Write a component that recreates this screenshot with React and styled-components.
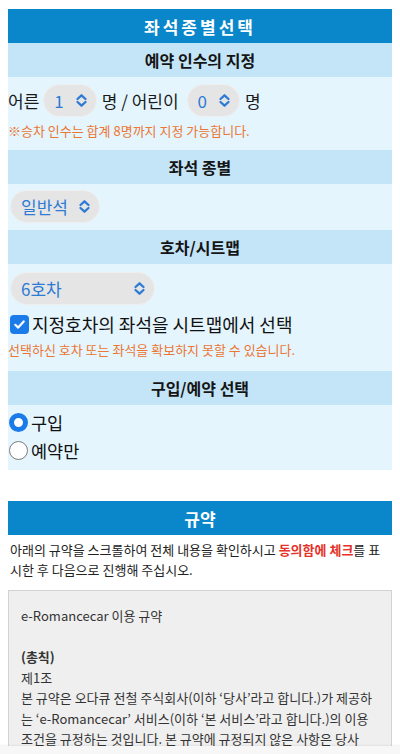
import styled, { createGlobalStyle } from 'styled-components'

const GlobalStyle = createGlobalStyle`
  body {
    margin: 0;
    background: #ffffff;
    font-family: "Noto Sans CJK KR", "Noto Sans", sans-serif;
    color: #111;
  }
`

const Page = styled.div`
  padding: 9px 8px 40px;
`

const TitleBar = styled.div`
  height: 34px;
  background-color: #0a87cb;
  color: #ffffff;
  font-weight: 700;
  font-size: 17px;
  letter-spacing: ${(props) => props.spacing || '0px'};
  display: flex;
  align-items: center;
  justify-content: center;
`

const SubHeader = styled.div`
  height: 34px;
  background-color: #c4e5f8;
  font-weight: 700;
  font-size: 16px;
  color: #151515;
  display: flex;
  align-items: center;
  justify-content: center;
`

const Panel = styled.div`
  background-color: #e4f5fd;
  padding: ${(props) => props.pad || '0'};
  display: flex;
  flex-direction: column;
`

const CountRow = styled.div`
  display: flex;
  align-items: center;
  gap: 5px;
  height: 33px;
  font-size: 17px;
  color: #1a1a1a;
`

const Pill = styled.div`
  display: flex;
  align-items: center;
  justify-content: ${(props) => (props.wide ? 'space-between' : 'flex-start')};
  gap: ${(props) => props.gap || '10px'};
  width: ${(props) => props.width || 'auto'};
  height: 33px;
  box-sizing: border-box;
  padding: 0 8px 0 10px;
  margin-left: ${(props) => props.ml || '0'};
  border-radius: 17px;
  background-color: #e5e5e6;
  border: 1px solid #efefef;
  color: #2d7bd5;
  font-size: 17px;
  align-self: flex-start;
`

const Note = styled.div`
  color: #ec7633;
  font-size: 13px;
  line-height: 20px;
  margin-top: ${(props) => props.mt || '4px'};
`

const CheckRow = styled.div`
  display: flex;
  align-items: center;
  gap: 3px;
  height: 26px;
  margin-top: 6px;
  margin-left: 2px;
  font-size: 18px;
  color: #111;
`

const CheckBox = styled.span`
  width: 19px;
  height: 19px;
  border-radius: 4px;
  background-color: #1a7be9;
  display: flex;
  align-items: center;
  justify-content: center;
`

const RadioRow = styled.div`
  display: flex;
  align-items: center;
  gap: 3px;
  height: 28px;
  margin-left: 1px;
  font-size: 17.5px;
  color: #111;
`

const Radio = styled.span`
  width: 19px;
  height: 19px;
  box-sizing: border-box;
  border-radius: 50%;
  background-color: #ffffff;
  border: ${(props) => (props.checked ? '5.5px solid #1a7be9' : '1.5px solid #7a7a7a')};
`

const Gap = styled.div`
  height: 31px;
`

const Intro = styled.p`
  margin: 5px 0 10px;
  padding: 0 2px;
  font-size: 13px;
  line-height: 20px;
  color: #222;

  strong {
    color: #e5322a;
    font-weight: 700;
  }
`

const TermsBox = styled.div`
  box-sizing: border-box;
  padding: 15px 12px;
  background-color: #efefef;
  border: 1px solid #d3d3d3;
  font-size: 13px;
  line-height: 20.5px;
  color: #333;

  p {
    margin: 0;
  }
  b {
    font-weight: 700;
  }
`

const BottomBar = styled.div`
  position: fixed;
  left: 0;
  right: 0;
  bottom: 0;
  height: 8px;
  background-color: #f7f7f7;
  box-shadow: 0 -1px 2px rgba(0, 0, 0, 0.06);
`

function UpDown() {
  return (
    <svg width="13" height="15" viewBox="0 0 13 15" fill="none">
      <path d="M2.5 6 L6.5 2.3 L10.5 6" stroke="#2d7bd5" strokeWidth="2.3" strokeLinecap="round" strokeLinejoin="round" />
      <path d="M2.5 9 L6.5 12.7 L10.5 9" stroke="#2d7bd5" strokeWidth="2.3" strokeLinecap="round" strokeLinejoin="round" />
    </svg>
  )
}

function Check() {
  return (
    <svg width="13" height="13" viewBox="0 0 13 13" fill="none">
      <path d="M2.3 6.8 L5.2 9.6 L10.7 3.4" stroke="#ffffff" strokeWidth="2.2" strokeLinecap="round" strokeLinejoin="round" />
    </svg>
  )
}

export default function App() {
  return (
    <>
      <GlobalStyle />
      <Page>
        <TitleBar spacing="3px">좌석종별선택</TitleBar>

        <SubHeader>예약 인수의 지정</SubHeader>
        <Panel pad="7px 0 9px">
          <CountRow>
            <span>어른</span>
            <Pill gap="11px" ml="-1px">
              1 <UpDown />
            </Pill>
            <span>명 / 어린이</span>
            <Pill gap="11px" ml="3px">
              0 <UpDown />
            </Pill>
            <span>명</span>
          </CountRow>
          <Note>※승차 인수는 합계 8명까지 지정 가능합니다.</Note>
        </Panel>

        <SubHeader>좌석 종별</SubHeader>
        <Panel pad="6px 0 7px">
          <Pill ml="2px">
            일반석 <UpDown />
          </Pill>
        </Panel>

        <SubHeader>호차/시트맵</SubHeader>
        <Panel pad="8px 0 11px">
          <Pill ml="2px" width="145px" wide>
            6호차 <UpDown />
          </Pill>
          <CheckRow>
            <CheckBox>
              <Check />
            </CheckBox>
            지정호차의 좌석을 시트맵에서 선택
          </CheckRow>
          <Note mt="3px">선택하신 호차 또는 좌석을 확보하지 못할 수 있습니다.</Note>
        </Panel>

        <SubHeader>구입/예약 선택</SubHeader>
        <Panel pad="3px 0 6px">
          <RadioRow>
            <Radio checked />
            구입
          </RadioRow>
          <RadioRow>
            <Radio />
            예약만
          </RadioRow>
        </Panel>

        <Gap />

        <TitleBar>규약</TitleBar>
        <Intro>
          아래의 규약을 스크롤하여 전체 내용을 확인하시고 <strong>동의함에 체크</strong>를 표시한 후 다음으로 진행해 주십시오.
        </Intro>
        <TermsBox>
          <p>e-Romancecar 이용 규약</p>
          <p>&nbsp;</p>
          <p>
            <b>(총칙)</b>
          </p>
          <p>제1조</p>
          <p>
            본 규약은 오다큐 전철 주식회사(이하 ‘당사’라고 합니다.)가 제공하는 ‘e-Romancecar’ 서비스(이하 ‘본 서비스’라고 합니다.)의 이용 조건을 규정하는 것입니다. 본 규약에 규정되지 않은 사항은 당사
          </p>
        </TermsBox>
      </Page>
      <BottomBar />
    </>
  )
}
